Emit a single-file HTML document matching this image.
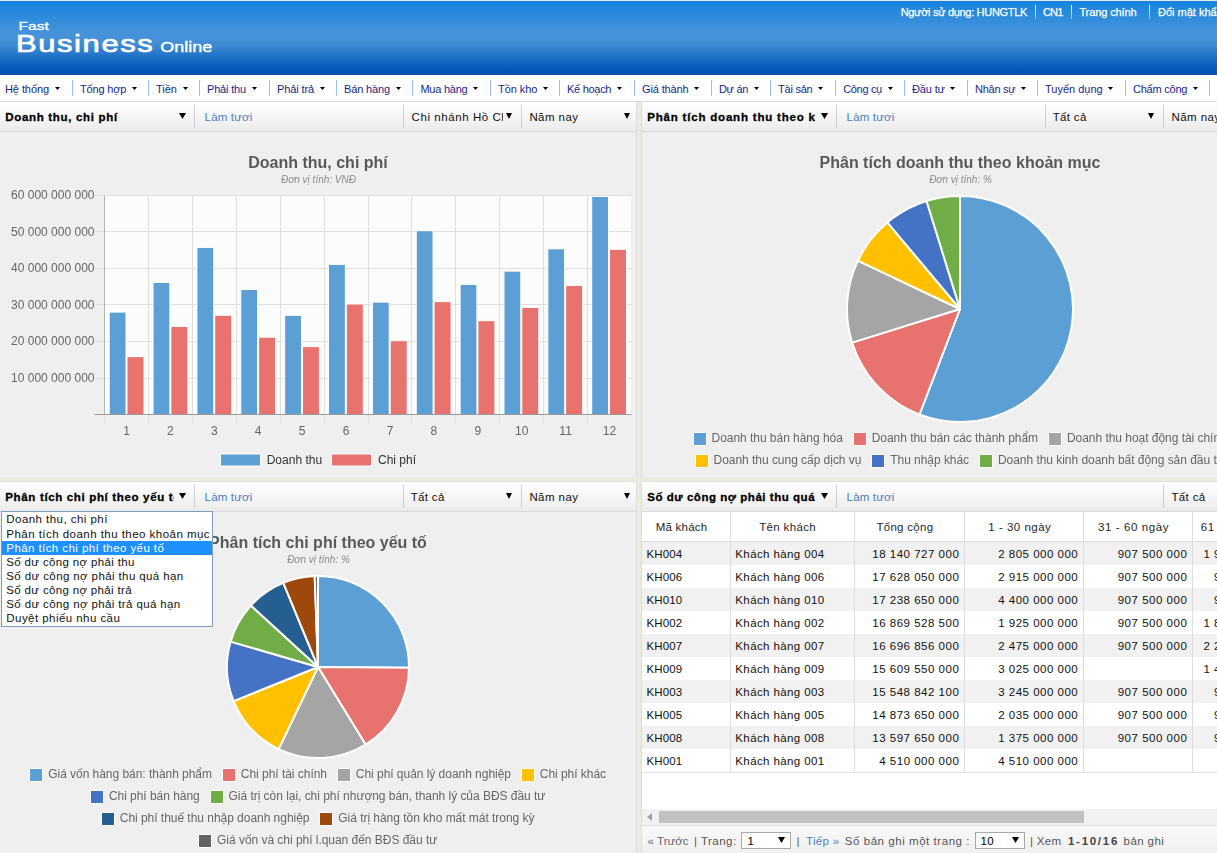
<!DOCTYPE html>
<html><head><meta charset="utf-8"><title>Fast Business Online</title>
<style>
html,body{margin:0;padding:0}
body{width:1217px;height:853px;overflow:hidden;position:relative;background:#ecebe0;font-family:"Liberation Sans",sans-serif}
.b{position:absolute;display:block}
.t{position:absolute;white-space:nowrap;display:block}
.b .t{position:absolute}
svg text{font-family:"Liberation Sans",sans-serif}
</style></head><body>
<div class="b" style="left:0px;top:0px;width:1217px;height:1px;background:#ece8e2;"></div>
<div class="b" style="left:0px;top:1px;width:1217px;height:74px;background:linear-gradient(to bottom,#1584e0 0%,#2f8cdc 22%,#4392da 40%,#4792d8 49%,#3f8bd3 60%,#2676ca 72%,#0f62be 85%,#0355b5 94%,#0052b4 100%);"></div>
<svg class="b" style="left:0;top:0" width="240" height="75" viewBox="0 0 240 75">
<g fill="#fff" font-family="Liberation Sans, sans-serif">
<text x="18.5" y="30" font-size="11.6" textLength="30.4" lengthAdjust="spacingAndGlyphs" stroke="#fff" stroke-width="0.3">Fast</text>
<g transform="translate(16.0 52.1) scale(1.28 1)"><text x="0" y="0" font-size="24.2" textLength="106.88" lengthAdjust="spacing" stroke="#fff" stroke-width="0.7">Business</text></g>
<text x="160.3" y="52.3" font-size="14.4" textLength="52" lengthAdjust="spacingAndGlyphs" stroke="#fff" stroke-width="0.35">Online</text>
</g></svg>
<span class="t" style="left:900.70px;top:6.00px;font-size:11px;line-height:13px;color:#fff;letter-spacing:-0.314px;-webkit-text-stroke:0.25px #fff;">Người sử dụng: HUNGTLK</span>
<div class="b" style="left:1035px;top:5px;width:1px;height:14px;background:linear-gradient(#fff,#bfb39d);"></div>
<span class="t" style="left:1043.00px;top:6.00px;font-size:11px;line-height:13px;color:#fff;letter-spacing:-0.835px;-webkit-text-stroke:0.25px #fff;">CN1</span>
<div class="b" style="left:1071px;top:5px;width:1px;height:14px;background:linear-gradient(#fff,#bfb39d);"></div>
<span class="t" style="left:1079.40px;top:6.00px;font-size:11px;line-height:13px;color:#fff;letter-spacing:-0.099px;-webkit-text-stroke:0.25px #fff;">Trang chính</span>
<div class="b" style="left:1149px;top:5px;width:1px;height:14px;background:linear-gradient(#fff,#bfb39d);"></div>
<span class="t" style="left:1158.00px;top:6.00px;font-size:11px;line-height:13px;color:#fff;-webkit-text-stroke:0.25px #fff;">Đổi mật khẩu</span>
<div class="b" style="left:0px;top:75px;width:1217px;height:26px;background:#fff;"></div>
<div class="b" style="left:0px;top:101px;width:1217px;height:1px;background:#d9d9d9;"></div>
<span class="t" style="left:5.00px;top:83.00px;font-size:11px;line-height:13px;color:#16288c;letter-spacing:-0.080px;">Hệ thống</span>
<svg class="b" style="left:55px;top:87px" width="5" height="3" viewBox="0 0 5 3"><path d="M0 0H5L2.5 3Z" fill="#000"/></svg>
<div class="b" style="left:72px;top:80px;width:1px;height:16px;background:#9dc0ee;"></div>
<span class="t" style="left:80.00px;top:83.00px;font-size:11px;line-height:13px;color:#16288c;letter-spacing:-0.159px;">Tổng hợp</span>
<svg class="b" style="left:132px;top:87px" width="5" height="3" viewBox="0 0 5 3"><path d="M0 0H5L2.5 3Z" fill="#000"/></svg>
<div class="b" style="left:148px;top:80px;width:1px;height:16px;background:#9dc0ee;"></div>
<span class="t" style="left:156.00px;top:83.00px;font-size:11px;line-height:13px;color:#16288c;">Tiền</span>
<svg class="b" style="left:183px;top:87px" width="5" height="3" viewBox="0 0 5 3"><path d="M0 0H5L2.5 3Z" fill="#000"/></svg>
<div class="b" style="left:199px;top:80px;width:1px;height:16px;background:#9dc0ee;"></div>
<span class="t" style="left:207.00px;top:83.00px;font-size:11px;line-height:13px;color:#16288c;letter-spacing:-0.170px;">Phải thu</span>
<svg class="b" style="left:252px;top:87px" width="5" height="3" viewBox="0 0 5 3"><path d="M0 0H5L2.5 3Z" fill="#000"/></svg>
<div class="b" style="left:269px;top:80px;width:1px;height:16px;background:#9dc0ee;"></div>
<span class="t" style="left:277.00px;top:83.00px;font-size:11px;line-height:13px;color:#16288c;letter-spacing:-0.113px;">Phải trả</span>
<svg class="b" style="left:320px;top:87px" width="5" height="3" viewBox="0 0 5 3"><path d="M0 0H5L2.5 3Z" fill="#000"/></svg>
<div class="b" style="left:336px;top:80px;width:1px;height:16px;background:#9dc0ee;"></div>
<span class="t" style="left:344.00px;top:83.00px;font-size:11px;line-height:13px;color:#16288c;letter-spacing:-0.137px;">Bán hàng</span>
<svg class="b" style="left:396px;top:87px" width="5" height="3" viewBox="0 0 5 3"><path d="M0 0H5L2.5 3Z" fill="#000"/></svg>
<div class="b" style="left:412px;top:80px;width:1px;height:16px;background:#9dc0ee;"></div>
<span class="t" style="left:420.40px;top:83.00px;font-size:11px;line-height:13px;color:#16288c;letter-spacing:-0.240px;">Mua hàng</span>
<svg class="b" style="left:473px;top:87px" width="5" height="3" viewBox="0 0 5 3"><path d="M0 0H5L2.5 3Z" fill="#000"/></svg>
<div class="b" style="left:490px;top:80px;width:1px;height:16px;background:#9dc0ee;"></div>
<span class="t" style="left:498.00px;top:83.00px;font-size:11px;line-height:13px;color:#16288c;letter-spacing:-0.063px;">Tồn kho</span>
<svg class="b" style="left:543px;top:87px" width="5" height="3" viewBox="0 0 5 3"><path d="M0 0H5L2.5 3Z" fill="#000"/></svg>
<div class="b" style="left:559px;top:80px;width:1px;height:16px;background:#9dc0ee;"></div>
<span class="t" style="left:567.00px;top:83.00px;font-size:11px;line-height:13px;color:#16288c;letter-spacing:-0.285px;">Kế hoạch</span>
<svg class="b" style="left:617px;top:87px" width="5" height="3" viewBox="0 0 5 3"><path d="M0 0H5L2.5 3Z" fill="#000"/></svg>
<div class="b" style="left:634px;top:80px;width:1px;height:16px;background:#9dc0ee;"></div>
<span class="t" style="left:642.00px;top:83.00px;font-size:11px;line-height:13px;color:#16288c;letter-spacing:-0.133px;">Giá thành</span>
<svg class="b" style="left:694px;top:87px" width="5" height="3" viewBox="0 0 5 3"><path d="M0 0H5L2.5 3Z" fill="#000"/></svg>
<div class="b" style="left:711px;top:80px;width:1px;height:16px;background:#9dc0ee;"></div>
<span class="t" style="left:719.00px;top:83.00px;font-size:11px;line-height:13px;color:#16288c;letter-spacing:-0.320px;">Dự án</span>
<svg class="b" style="left:754px;top:87px" width="5" height="3" viewBox="0 0 5 3"><path d="M0 0H5L2.5 3Z" fill="#000"/></svg>
<div class="b" style="left:770px;top:80px;width:1px;height:16px;background:#9dc0ee;"></div>
<span class="t" style="left:778.00px;top:83.00px;font-size:11px;line-height:13px;color:#16288c;letter-spacing:-0.224px;">Tài sản</span>
<svg class="b" style="left:818px;top:87px" width="5" height="3" viewBox="0 0 5 3"><path d="M0 0H5L2.5 3Z" fill="#000"/></svg>
<div class="b" style="left:835px;top:80px;width:1px;height:16px;background:#9dc0ee;"></div>
<span class="t" style="left:843.20px;top:83.00px;font-size:11px;line-height:13px;color:#16288c;letter-spacing:-0.324px;">Công cụ</span>
<svg class="b" style="left:888px;top:87px" width="5" height="3" viewBox="0 0 5 3"><path d="M0 0H5L2.5 3Z" fill="#000"/></svg>
<div class="b" style="left:904px;top:80px;width:1px;height:16px;background:#9dc0ee;"></div>
<span class="t" style="left:912.00px;top:83.00px;font-size:11px;line-height:13px;color:#16288c;letter-spacing:-0.142px;">Đầu tư</span>
<svg class="b" style="left:950px;top:87px" width="5" height="3" viewBox="0 0 5 3"><path d="M0 0H5L2.5 3Z" fill="#000"/></svg>
<div class="b" style="left:967px;top:80px;width:1px;height:16px;background:#9dc0ee;"></div>
<span class="t" style="left:975.00px;top:83.00px;font-size:11px;line-height:13px;color:#16288c;letter-spacing:-0.259px;">Nhân sự</span>
<svg class="b" style="left:1021px;top:87px" width="5" height="3" viewBox="0 0 5 3"><path d="M0 0H5L2.5 3Z" fill="#000"/></svg>
<div class="b" style="left:1037px;top:80px;width:1px;height:16px;background:#9dc0ee;"></div>
<span class="t" style="left:1045.00px;top:83.00px;font-size:11px;line-height:13px;color:#16288c;letter-spacing:-0.009px;">Tuyển dụng</span>
<svg class="b" style="left:1108px;top:87px" width="5" height="3" viewBox="0 0 5 3"><path d="M0 0H5L2.5 3Z" fill="#000"/></svg>
<div class="b" style="left:1125px;top:80px;width:1px;height:16px;background:#9dc0ee;"></div>
<span class="t" style="left:1133.00px;top:83.00px;font-size:11px;line-height:13px;color:#16288c;letter-spacing:-0.228px;">Chấm công</span>
<svg class="b" style="left:1193px;top:87px" width="5" height="3" viewBox="0 0 5 3"><path d="M0 0H5L2.5 3Z" fill="#000"/></svg>
<div class="b" style="left:1209px;top:80px;width:1px;height:16px;background:#9dc0ee;"></div>
<div class="b" style="left:0px;top:132px;width:636px;height:345px;background:#efefef;"></div>
<div class="b" style="left:636px;top:101px;width:1px;height:376px;background:#dcdcdc;"></div>
<div class="b" style="left:0px;top:102px;width:636px;height:29px;background:linear-gradient(to bottom,#ffffff 0%,#f6f6f6 50%,#ebebeb 100%);"></div>
<div class="b" style="left:0px;top:131px;width:636px;height:1px;background:#d8d8d8;"></div>
<div class="b" style="left:0px;top:102px;width:173.6px;height:29px;overflow:hidden">
<span class="t" style="left:5.30px;top:9.00px;font-size:11.5px;line-height:13px;color:#000;font-weight:bold;letter-spacing:0.678px;-webkit-text-stroke:0.3px #000;">Doanh thu, chi phí</span>
</div>
<svg class="b" style="left:179px;top:113px" width="7" height="6" viewBox="0 0 7 6"><path d="M0 0H7L3.5 6Z" fill="#000"/></svg>
<div class="b" style="left:194px;top:105px;width:1px;height:23px;background:#cfcfcf;"></div>
<span class="t" style="left:204.60px;top:111.00px;font-size:11.5px;line-height:13px;color:#4a80c2;letter-spacing:0.156px;">Làm tươi</span>
<div class="b" style="left:403px;top:105px;width:1px;height:23px;background:#cfcfcf;"></div>
<div class="b" style="left:411px;top:102px;width:91.5px;height:29px;overflow:hidden">
<span class="t" style="left:0.60px;top:9.00px;font-size:11.5px;line-height:13px;color:#111;letter-spacing:0.568px;">Chi nhánh Hồ Chí Minh</span>
</div>
<svg class="b" style="left:506px;top:113px" width="6" height="6" viewBox="0 0 6 6"><path d="M0 0H6L3.0 6Z" fill="#000"/></svg>
<div class="b" style="left:521px;top:105px;width:1px;height:23px;background:#cfcfcf;"></div>
<span class="t" style="left:529.40px;top:111.00px;font-size:11.5px;line-height:13px;color:#111;letter-spacing:0.426px;">Năm nay</span>
<svg class="b" style="left:624px;top:113px" width="6" height="6" viewBox="0 0 6 6"><path d="M0 0H6L3.0 6Z" fill="#000"/></svg>
<div class="b" style="left:642px;top:132px;width:640px;height:345px;background:#efefef;"></div>
<div class="b" style="left:641px;top:101px;width:1px;height:376px;background:#dcdcdc;"></div>
<div class="b" style="left:642px;top:102px;width:640px;height:29px;background:linear-gradient(to bottom,#ffffff 0%,#f6f6f6 50%,#ebebeb 100%);"></div>
<div class="b" style="left:642px;top:131px;width:640px;height:1px;background:#d8d8d8;"></div>
<div class="b" style="left:642px;top:102px;width:173.6px;height:29px;overflow:hidden">
<span class="t" style="left:5.30px;top:9.00px;font-size:11.5px;line-height:13px;color:#000;font-weight:bold;letter-spacing:0.801px;-webkit-text-stroke:0.3px #000;">Phân tích doanh thu theo khoản mục</span>
</div>
<svg class="b" style="left:821px;top:113px" width="7" height="6" viewBox="0 0 7 6"><path d="M0 0H7L3.5 6Z" fill="#000"/></svg>
<div class="b" style="left:836px;top:105px;width:1px;height:23px;background:#cfcfcf;"></div>
<span class="t" style="left:846.60px;top:111.00px;font-size:11.5px;line-height:13px;color:#4a80c2;letter-spacing:0.156px;">Làm tươi</span>
<div class="b" style="left:1045px;top:105px;width:1px;height:23px;background:#cfcfcf;"></div>
<span class="t" style="left:1052.70px;top:111.00px;font-size:11.5px;line-height:13px;color:#111;letter-spacing:0.341px;">Tất cả</span>
<svg class="b" style="left:1148px;top:113px" width="6" height="6" viewBox="0 0 6 6"><path d="M0 0H6L3.0 6Z" fill="#000"/></svg>
<div class="b" style="left:1163px;top:105px;width:1px;height:23px;background:#cfcfcf;"></div>
<span class="t" style="left:1171.50px;top:111.00px;font-size:11.5px;line-height:13px;color:#111;letter-spacing:0.426px;">Năm nay</span>
<div class="b" style="left:0px;top:481px;width:636px;height:1px;background:#dcdcdc;"></div>
<div class="b" style="left:0px;top:512px;width:636px;height:345px;background:#efefef;"></div>
<div class="b" style="left:636px;top:481px;width:1px;height:376px;background:#dcdcdc;"></div>
<div class="b" style="left:0px;top:482px;width:636px;height:29px;background:linear-gradient(to bottom,#ffffff 0%,#f6f6f6 50%,#ebebeb 100%);"></div>
<div class="b" style="left:0px;top:511px;width:636px;height:1px;background:#d8d8d8;"></div>
<div class="b" style="left:0px;top:482px;width:173.6px;height:29px;overflow:hidden">
<span class="t" style="left:5.30px;top:9.00px;font-size:11.5px;line-height:13px;color:#000;font-weight:bold;letter-spacing:0.657px;-webkit-text-stroke:0.3px #000;">Phân tích chi phí theo yếu tố</span>
</div>
<svg class="b" style="left:179px;top:493px" width="7" height="6" viewBox="0 0 7 6"><path d="M0 0H7L3.5 6Z" fill="#000"/></svg>
<div class="b" style="left:194px;top:485px;width:1px;height:23px;background:#cfcfcf;"></div>
<span class="t" style="left:204.60px;top:491.00px;font-size:11.5px;line-height:13px;color:#4a80c2;letter-spacing:0.156px;">Làm tươi</span>
<div class="b" style="left:403px;top:485px;width:1px;height:23px;background:#cfcfcf;"></div>
<span class="t" style="left:410.70px;top:491.00px;font-size:11.5px;line-height:13px;color:#111;letter-spacing:0.341px;">Tất cả</span>
<svg class="b" style="left:506px;top:493px" width="6" height="6" viewBox="0 0 6 6"><path d="M0 0H6L3.0 6Z" fill="#000"/></svg>
<div class="b" style="left:521px;top:485px;width:1px;height:23px;background:#cfcfcf;"></div>
<span class="t" style="left:529.40px;top:491.00px;font-size:11.5px;line-height:13px;color:#111;letter-spacing:0.426px;">Năm nay</span>
<svg class="b" style="left:624px;top:493px" width="6" height="6" viewBox="0 0 6 6"><path d="M0 0H6L3.0 6Z" fill="#000"/></svg>
<div class="b" style="left:642px;top:481px;width:640px;height:1px;background:#dcdcdc;"></div>
<div class="b" style="left:642px;top:512px;width:640px;height:345px;background:#fff;"></div>
<div class="b" style="left:641px;top:481px;width:1px;height:376px;background:#dcdcdc;"></div>
<div class="b" style="left:642px;top:482px;width:640px;height:29px;background:linear-gradient(to bottom,#ffffff 0%,#f6f6f6 50%,#ebebeb 100%);"></div>
<div class="b" style="left:642px;top:511px;width:640px;height:1px;background:#d8d8d8;"></div>
<div class="b" style="left:642px;top:482px;width:173.6px;height:29px;overflow:hidden">
<span class="t" style="left:5.30px;top:9.00px;font-size:11.5px;line-height:13px;color:#000;font-weight:bold;letter-spacing:0.535px;-webkit-text-stroke:0.3px #000;">Số dư công nợ phải thu quá hạn</span>
</div>
<svg class="b" style="left:821px;top:493px" width="7" height="6" viewBox="0 0 7 6"><path d="M0 0H7L3.5 6Z" fill="#000"/></svg>
<div class="b" style="left:836px;top:485px;width:1px;height:23px;background:#cfcfcf;"></div>
<span class="t" style="left:846.60px;top:491.00px;font-size:11.5px;line-height:13px;color:#4a80c2;letter-spacing:0.156px;">Làm tươi</span>
<div class="b" style="left:1163px;top:485px;width:1px;height:23px;background:#cfcfcf;"></div>
<span class="t" style="left:1171.50px;top:491.00px;font-size:11.5px;line-height:13px;color:#111;letter-spacing:0.341px;">Tất cả</span>
<svg class="b" style="left:0;top:0;will-change:transform" width="636" height="477" viewBox="0 0 636 477" font-family="Liberation Sans, sans-serif"><text x="318" y="168" font-size="16" font-weight="bold" fill="#595959" text-anchor="middle">Doanh thu, chi phí</text><text x="318.5" y="183" font-size="10" font-style="italic" fill="#8a8a8a" text-anchor="middle">Đơn vị tính: VNĐ</text><rect x="104.0" y="195.0" width="527.0" height="219.0" fill="#fcfcfc"/><path d="M104.5 195.5V424.5" stroke="#dfdfdf" stroke-width="1"/><path d="M148.5 195.5V424.5" stroke="#dfdfdf" stroke-width="1"/><path d="M192.5 195.5V424.5" stroke="#dfdfdf" stroke-width="1"/><path d="M236.5 195.5V424.5" stroke="#dfdfdf" stroke-width="1"/><path d="M280.5 195.5V424.5" stroke="#dfdfdf" stroke-width="1"/><path d="M324.5 195.5V424.5" stroke="#dfdfdf" stroke-width="1"/><path d="M368.5 195.5V424.5" stroke="#dfdfdf" stroke-width="1"/><path d="M411.5 195.5V424.5" stroke="#dfdfdf" stroke-width="1"/><path d="M455.5 195.5V424.5" stroke="#dfdfdf" stroke-width="1"/><path d="M499.5 195.5V424.5" stroke="#dfdfdf" stroke-width="1"/><path d="M543.5 195.5V424.5" stroke="#dfdfdf" stroke-width="1"/><path d="M587.5 195.5V424.5" stroke="#dfdfdf" stroke-width="1"/><path d="M94.5 378.5H631.5" stroke="#dfdfdf" stroke-width="1"/><text x="94.5" y="381.8" font-size="12" fill="#666" text-anchor="end">10 000 000 000</text><path d="M94.5 341.5H631.5" stroke="#dfdfdf" stroke-width="1"/><text x="94.5" y="345.3" font-size="12" fill="#666" text-anchor="end">20 000 000 000</text><path d="M94.5 304.5H631.5" stroke="#dfdfdf" stroke-width="1"/><text x="94.5" y="308.8" font-size="12" fill="#666" text-anchor="end">30 000 000 000</text><path d="M94.5 268.5H631.5" stroke="#dfdfdf" stroke-width="1"/><text x="94.5" y="272.3" font-size="12" fill="#666" text-anchor="end">40 000 000 000</text><path d="M94.5 231.5H631.5" stroke="#dfdfdf" stroke-width="1"/><text x="94.5" y="235.8" font-size="12" fill="#666" text-anchor="end">50 000 000 000</text><path d="M94.5 195.5H631.5" stroke="#dfdfdf" stroke-width="1"/><text x="94.5" y="199.3" font-size="12" fill="#666" text-anchor="end">60 000 000 000</text><rect x="109.20" y="312.1" width="16.8" height="102.4" fill="#5b9fd5" stroke="#fff" stroke-width="1"/><rect x="127.00" y="356.6" width="17" height="57.9" fill="#e8736e" stroke="#fff" stroke-width="1"/><text x="126.5" y="435" font-size="12" fill="#666" text-anchor="middle">1</text><rect x="153.06" y="282.5" width="16.8" height="132.0" fill="#5b9fd5" stroke="#fff" stroke-width="1"/><rect x="170.87" y="326.4" width="17" height="88.1" fill="#e8736e" stroke="#fff" stroke-width="1"/><text x="170.4" y="435" font-size="12" fill="#666" text-anchor="middle">2</text><rect x="196.93" y="247.4" width="16.8" height="167.1" fill="#5b9fd5" stroke="#fff" stroke-width="1"/><rect x="214.73" y="315.3" width="17" height="99.2" fill="#e8736e" stroke="#fff" stroke-width="1"/><text x="214.3" y="435" font-size="12" fill="#666" text-anchor="middle">3</text><rect x="240.80" y="289.5" width="16.8" height="125.0" fill="#5b9fd5" stroke="#fff" stroke-width="1"/><rect x="258.60" y="337.2" width="17" height="77.3" fill="#e8736e" stroke="#fff" stroke-width="1"/><text x="258.2" y="435" font-size="12" fill="#666" text-anchor="middle">4</text><rect x="284.66" y="315.3" width="16.8" height="99.2" fill="#5b9fd5" stroke="#fff" stroke-width="1"/><rect x="302.46" y="346.6" width="17" height="67.9" fill="#e8736e" stroke="#fff" stroke-width="1"/><text x="302.1" y="435" font-size="12" fill="#666" text-anchor="middle">5</text><rect x="328.53" y="264.4" width="16.8" height="150.1" fill="#5b9fd5" stroke="#fff" stroke-width="1"/><rect x="346.33" y="304.0" width="17" height="110.5" fill="#e8736e" stroke="#fff" stroke-width="1"/><text x="346.0" y="435" font-size="12" fill="#666" text-anchor="middle">6</text><rect x="372.39" y="302.1" width="16.8" height="112.4" fill="#5b9fd5" stroke="#fff" stroke-width="1"/><rect x="390.19" y="340.7" width="17" height="73.8" fill="#e8736e" stroke="#fff" stroke-width="1"/><text x="390.0" y="435" font-size="12" fill="#666" text-anchor="middle">7</text><rect x="416.25" y="230.7" width="16.8" height="183.8" fill="#5b9fd5" stroke="#fff" stroke-width="1"/><rect x="434.06" y="301.6" width="17" height="112.9" fill="#e8736e" stroke="#fff" stroke-width="1"/><text x="433.9" y="435" font-size="12" fill="#666" text-anchor="middle">8</text><rect x="460.12" y="284.4" width="16.8" height="130.1" fill="#5b9fd5" stroke="#fff" stroke-width="1"/><rect x="477.92" y="320.7" width="17" height="93.8" fill="#e8736e" stroke="#fff" stroke-width="1"/><text x="477.8" y="435" font-size="12" fill="#666" text-anchor="middle">9</text><rect x="503.99" y="271.1" width="16.8" height="143.4" fill="#5b9fd5" stroke="#fff" stroke-width="1"/><rect x="521.78" y="307.5" width="17" height="107.0" fill="#e8736e" stroke="#fff" stroke-width="1"/><text x="521.7" y="435" font-size="12" fill="#666" text-anchor="middle">10</text><rect x="547.85" y="248.8" width="16.8" height="165.7" fill="#5b9fd5" stroke="#fff" stroke-width="1"/><rect x="565.65" y="285.4" width="17" height="129.1" fill="#e8736e" stroke="#fff" stroke-width="1"/><text x="565.6" y="435" font-size="12" fill="#666" text-anchor="middle">11</text><rect x="591.72" y="196.5" width="16.8" height="218.0" fill="#5b9fd5" stroke="#fff" stroke-width="1"/><rect x="609.51" y="249.3" width="17" height="165.2" fill="#e8736e" stroke="#fff" stroke-width="1"/><text x="609.5" y="435" font-size="12" fill="#666" text-anchor="middle">12</text><path d="M94.5 414.5H631.5" stroke="#9a9a9a" stroke-width="1"/><path d="M104.5 195.5V414.5" stroke="#b5b5b5" stroke-width="1"/><rect x="220.5" y="454" width="40" height="12" fill="#5b9fd5" stroke="#fff" stroke-width="1"/><text x="266.7" y="464" font-size="12" fill="#333">Doanh thu</text><rect x="331.5" y="454" width="40" height="12" fill="#e8736e" stroke="#fff" stroke-width="1"/><text x="378" y="464" font-size="12" fill="#333">Chi phí</text></svg>
<svg class="b" style="left:0;top:0;will-change:transform" width="1280" height="477" viewBox="0 0 1280 477" font-family="Liberation Sans, sans-serif"><text x="960" y="168" font-size="16" font-weight="bold" fill="#595959" text-anchor="middle">Phân tích doanh thu theo khoản mục</text><text x="960.5" y="183" font-size="10" font-style="italic" fill="#8a8a8a" text-anchor="middle">Đơn vị tính: %</text><path d="M960 309L960.00 196.00A113 113 0 1 1 919.50 414.49Z" fill="#5b9fd5" stroke="#fff" stroke-width="2" stroke-linejoin="round"/><path d="M960 309L919.50 414.49A113 113 0 0 1 852.11 342.60Z" fill="#e8736e" stroke="#fff" stroke-width="2" stroke-linejoin="round"/><path d="M960 309L852.11 342.60A113 113 0 0 1 857.84 260.71Z" fill="#a5a5a5" stroke="#fff" stroke-width="2" stroke-linejoin="round"/><path d="M960 309L857.84 260.71A113 113 0 0 1 887.37 222.44Z" fill="#ffc000" stroke="#fff" stroke-width="2" stroke-linejoin="round"/><path d="M960 309L887.37 222.44A113 113 0 0 1 926.58 201.05Z" fill="#4472c4" stroke="#fff" stroke-width="2" stroke-linejoin="round"/><path d="M960 309L926.58 201.05A113 113 0 0 1 960.00 196.00Z" fill="#70ad47" stroke="#fff" stroke-width="2" stroke-linejoin="round"/><rect x="693.5" y="432.5" width="13" height="13" fill="#5b9fd5" stroke="#fff" stroke-width="1"/><text x="711.55" y="442" font-size="12" fill="#666" textLength="131.32" lengthAdjust="spacing">Doanh thu bán hàng hóa</text><rect x="853.5" y="432.5" width="13" height="13" fill="#e8736e" stroke="#fff" stroke-width="1"/><text x="871.67" y="442" font-size="12" fill="#666" textLength="166.45" lengthAdjust="spacing">Doanh thu bán các thành phẩm</text><rect x="1048.5" y="432.5" width="13" height="13" fill="#a5a5a5" stroke="#fff" stroke-width="1"/><text x="1066.92" y="442" font-size="12" fill="#666" textLength="159.82" lengthAdjust="spacing">Doanh thu hoạt động tài chính</text><rect x="695.5" y="454.5" width="13" height="13" fill="#ffc000" stroke="#fff" stroke-width="1"/><text x="713.54" y="464" font-size="12" fill="#666" textLength="147.87" lengthAdjust="spacing">Doanh thu cung cấp dịch vụ</text><rect x="871.5" y="454.5" width="13" height="13" fill="#4472c4" stroke="#fff" stroke-width="1"/><text x="890.21" y="464" font-size="12" fill="#666" textLength="78.91" lengthAdjust="spacing">Thu nhập khác</text><rect x="979.5" y="454.5" width="13" height="13" fill="#70ad47" stroke="#fff" stroke-width="1"/><text x="997.92" y="464" font-size="12" fill="#666" textLength="226.84" lengthAdjust="spacing">Doanh thu kinh doanh bất động sản đầu tư</text></svg>
<svg class="b" style="left:0;top:0;will-change:transform" width="636" height="853" viewBox="0 0 636 853" font-family="Liberation Sans, sans-serif"><text x="318" y="548" font-size="16" font-weight="bold" fill="#595959" text-anchor="middle">Phân tích chi phí theo yếu tố</text><text x="318.5" y="563" font-size="10" font-style="italic" fill="#8a8a8a" text-anchor="middle">Đơn vị tính: %</text><path d="M318 667L318.00 576.00A91 91 0 0 1 409.00 667.64Z" fill="#5b9fd5" stroke="#fff" stroke-width="2" stroke-linejoin="round"/><path d="M318 667L409.00 667.64A91 91 0 0 1 365.55 744.59Z" fill="#e8736e" stroke="#fff" stroke-width="2" stroke-linejoin="round"/><path d="M318 667L365.55 744.59A91 91 0 0 1 278.68 749.07Z" fill="#a5a5a5" stroke="#fff" stroke-width="2" stroke-linejoin="round"/><path d="M318 667L278.68 749.07A91 91 0 0 1 233.63 701.09Z" fill="#ffc000" stroke="#fff" stroke-width="2" stroke-linejoin="round"/><path d="M318 667L233.63 701.09A91 91 0 0 1 230.61 641.61Z" fill="#4472c4" stroke="#fff" stroke-width="2" stroke-linejoin="round"/><path d="M318 667L230.61 641.61A91 91 0 0 1 250.91 605.52Z" fill="#70ad47" stroke="#fff" stroke-width="2" stroke-linejoin="round"/><path d="M318 667L250.91 605.52A91 91 0 0 1 283.32 582.87Z" fill="#255e91" stroke="#fff" stroke-width="2" stroke-linejoin="round"/><path d="M318 667L283.32 582.87A91 91 0 0 1 314.67 576.06Z" fill="#9e480e" stroke="#fff" stroke-width="2" stroke-linejoin="round"/><path d="M318 667L314.67 576.06A91 91 0 0 1 318.00 576.00Z" fill="#636363" stroke="#fff" stroke-width="2" stroke-linejoin="round"/><rect x="29.5" y="768.5" width="13" height="13" fill="#5b9fd5" stroke="#fff" stroke-width="1"/><text x="48.21" y="778" font-size="12" fill="#666" textLength="163.80" lengthAdjust="spacing">Giá vốn hàng bán: thành phẩm</text><rect x="222.5" y="768.5" width="13" height="13" fill="#e8736e" stroke="#fff" stroke-width="1"/><text x="240.81" y="778" font-size="12" fill="#666" textLength="86.20" lengthAdjust="spacing">Chi phí tài chính</text><rect x="337.5" y="768.5" width="13" height="13" fill="#a5a5a5" stroke="#fff" stroke-width="1"/><text x="355.81" y="778" font-size="12" fill="#666" textLength="155.18" lengthAdjust="spacing">Chi phí quản lý doanh nghiệp</text><rect x="521.5" y="768.5" width="13" height="13" fill="#ffc000" stroke="#fff" stroke-width="1"/><text x="539.79" y="778" font-size="12" fill="#666" textLength="66.30" lengthAdjust="spacing">Chi phí khác</text><rect x="90.5" y="790.5" width="13" height="13" fill="#4472c4" stroke="#fff" stroke-width="1"/><text x="108.89" y="800" font-size="12" fill="#666" textLength="90.85" lengthAdjust="spacing">Chi phí bán hàng</text><rect x="210.5" y="790.5" width="13" height="13" fill="#70ad47" stroke="#fff" stroke-width="1"/><text x="228.55" y="800" font-size="12" fill="#666" textLength="316.86" lengthAdjust="spacing">Giá trị còn lại, chi phí nhượng bán, thanh lý của BĐS đầu tư</text><rect x="101.5" y="812.5" width="13" height="13" fill="#255e91" stroke="#fff" stroke-width="1"/><text x="119.79" y="822" font-size="12" fill="#666" textLength="189.68" lengthAdjust="spacing">Chi phí thuế thu nhập doanh nghiệp</text><rect x="319.5" y="812.5" width="13" height="13" fill="#9e480e" stroke="#fff" stroke-width="1"/><text x="338.27" y="822" font-size="12" fill="#666" textLength="196.24" lengthAdjust="spacing">Giá trị hàng tồn kho mất mát trong kỳ</text><rect x="198.5" y="834.5" width="13" height="13" fill="#636363" stroke="#fff" stroke-width="1"/><text x="217.06" y="844" font-size="12" fill="#666" textLength="220.17" lengthAdjust="spacing">Giá vốn và chi phí l.quan đến BĐS đầu tư</text></svg>
<div class="b" style="left:1px;top:511px;width:212px;height:116px;background:#fff;border:1px solid #7f9db9;box-sizing:border-box;"></div>
<span class="t" style="left:6.30px;top:513.40px;font-size:11.5px;line-height:13px;color:#111;letter-spacing:0.453px;">Doanh thu, chi phí</span>
<span class="t" style="left:6.30px;top:527.50px;font-size:11.5px;line-height:13px;color:#111;letter-spacing:0.463px;">Phân tích doanh thu theo khoản mục</span>
<div class="b" style="left:2px;top:541px;width:210px;height:14px;background:#1e90ff;"></div>
<span class="t" style="left:6.30px;top:541.60px;font-size:11.5px;line-height:13px;color:#fff;letter-spacing:0.422px;">Phân tích chi phí theo yếu tố</span>
<span class="t" style="left:6.30px;top:555.70px;font-size:11.5px;line-height:13px;color:#111;letter-spacing:0.353px;">Số dư công nợ phải thu</span>
<span class="t" style="left:6.30px;top:569.80px;font-size:11.5px;line-height:13px;color:#111;letter-spacing:0.393px;">Số dư công nợ phải thu quá hạn</span>
<span class="t" style="left:6.30px;top:583.90px;font-size:11.5px;line-height:13px;color:#111;letter-spacing:0.338px;">Số dư công nợ phải trả</span>
<span class="t" style="left:6.30px;top:598.00px;font-size:11.5px;line-height:13px;color:#111;letter-spacing:0.379px;">Số dư công nợ phải trả quá hạn</span>
<span class="t" style="left:6.30px;top:612.10px;font-size:11.5px;line-height:13px;color:#111;letter-spacing:0.448px;">Duyệt phiếu nhu cầu</span>
<div class="b" style="left:642px;top:512px;width:640px;height:29px;background:#fff;"></div>
<div class="b" style="left:642px;top:541px;width:640px;height:1px;background:#dddddd;"></div>
<div class="b" style="left:642px;top:542px;width:640px;height:23px;background:#f1f1f1;"></div>
<div class="b" style="left:642px;top:588px;width:640px;height:23px;background:#f1f1f1;"></div>
<div class="b" style="left:642px;top:634px;width:640px;height:23px;background:#f1f1f1;"></div>
<div class="b" style="left:642px;top:680px;width:640px;height:23px;background:#f1f1f1;"></div>
<div class="b" style="left:642px;top:726px;width:640px;height:23px;background:#f1f1f1;"></div>
<div class="b" style="left:730px;top:512px;width:1px;height:260px;background:#dddddd;"></div>
<div class="b" style="left:854px;top:512px;width:1px;height:260px;background:#dddddd;"></div>
<div class="b" style="left:964px;top:512px;width:1px;height:260px;background:#dddddd;"></div>
<div class="b" style="left:1083px;top:512px;width:1px;height:260px;background:#dddddd;"></div>
<div class="b" style="left:1192px;top:512px;width:1px;height:260px;background:#dddddd;"></div>
<div class="b" style="left:642px;top:772px;width:640px;height:1px;background:#dddddd;"></div>
<span class="t" style="left:655.70px;top:521.00px;font-size:11.5px;line-height:13px;color:#1f1f2a;letter-spacing:0.243px;">Mã khách</span>
<span class="t" style="left:759.20px;top:521.00px;font-size:11.5px;line-height:13px;color:#1f1f2a;letter-spacing:0.345px;">Tên khách</span>
<span class="t" style="left:876.40px;top:521.00px;font-size:11.5px;line-height:13px;color:#1f1f2a;letter-spacing:0.295px;">Tổng cộng</span>
<span class="t" style="left:988.30px;top:521.00px;font-size:11.5px;line-height:13px;color:#1f1f2a;letter-spacing:0.497px;">1 - 30 ngày</span>
<span class="t" style="left:1098.00px;top:521.00px;font-size:11.5px;line-height:13px;color:#1f1f2a;letter-spacing:0.606px;">31 - 60 ngày</span>
<span class="t" style="left:1200.70px;top:521.00px;font-size:11.5px;line-height:13px;color:#1f1f2a;letter-spacing:0.606px;">61 - 90 ngày</span>
<span class="t" style="left:646.40px;top:548.00px;font-size:11.5px;line-height:13px;color:#111;letter-spacing:0.168px;">KH004</span>
<span class="t" style="left:735.30px;top:548.00px;font-size:11.5px;line-height:13px;color:#111;letter-spacing:0.395px;">Khách hàng 004</span>
<span class="t" style="left:872.30px;top:548.00px;font-size:11.5px;line-height:13px;color:#111;letter-spacing:0.505px;">18 140 727 000</span>
<span class="t" style="left:998.16px;top:548.00px;font-size:11.5px;line-height:13px;color:#111;letter-spacing:0.500px;">2 805 000 000</span>
<span class="t" style="left:1117.70px;top:548.00px;font-size:11.5px;line-height:13px;color:#111;letter-spacing:0.514px;">907 500 000</span>
<span class="t" style="left:1203.46px;top:548.00px;font-size:11.5px;line-height:13px;color:#111;letter-spacing:0.500px;">1 905 000 000</span>
<span class="t" style="left:646.40px;top:571.00px;font-size:11.5px;line-height:13px;color:#111;letter-spacing:0.168px;">KH006</span>
<span class="t" style="left:735.30px;top:571.00px;font-size:11.5px;line-height:13px;color:#111;letter-spacing:0.395px;">Khách hàng 006</span>
<span class="t" style="left:872.30px;top:571.00px;font-size:11.5px;line-height:13px;color:#111;letter-spacing:0.505px;">17 628 050 000</span>
<span class="t" style="left:998.16px;top:571.00px;font-size:11.5px;line-height:13px;color:#111;letter-spacing:0.500px;">2 915 000 000</span>
<span class="t" style="left:1117.70px;top:571.00px;font-size:11.5px;line-height:13px;color:#111;letter-spacing:0.514px;">907 500 000</span>
<span class="t" style="left:1213.90px;top:571.00px;font-size:11.5px;line-height:13px;color:#111;letter-spacing:0.514px;">907 500 000</span>
<span class="t" style="left:646.40px;top:594.00px;font-size:11.5px;line-height:13px;color:#111;letter-spacing:0.168px;">KH010</span>
<span class="t" style="left:735.30px;top:594.00px;font-size:11.5px;line-height:13px;color:#111;letter-spacing:0.395px;">Khách hàng 010</span>
<span class="t" style="left:872.30px;top:594.00px;font-size:11.5px;line-height:13px;color:#111;letter-spacing:0.505px;">17 238 650 000</span>
<span class="t" style="left:998.16px;top:594.00px;font-size:11.5px;line-height:13px;color:#111;letter-spacing:0.500px;">4 400 000 000</span>
<span class="t" style="left:1117.70px;top:594.00px;font-size:11.5px;line-height:13px;color:#111;letter-spacing:0.514px;">907 500 000</span>
<span class="t" style="left:1213.90px;top:594.00px;font-size:11.5px;line-height:13px;color:#111;letter-spacing:0.514px;">907 500 000</span>
<span class="t" style="left:646.40px;top:617.00px;font-size:11.5px;line-height:13px;color:#111;letter-spacing:0.168px;">KH002</span>
<span class="t" style="left:735.30px;top:617.00px;font-size:11.5px;line-height:13px;color:#111;letter-spacing:0.395px;">Khách hàng 002</span>
<span class="t" style="left:872.30px;top:617.00px;font-size:11.5px;line-height:13px;color:#111;letter-spacing:0.505px;">16 869 528 500</span>
<span class="t" style="left:998.16px;top:617.00px;font-size:11.5px;line-height:13px;color:#111;letter-spacing:0.500px;">1 925 000 000</span>
<span class="t" style="left:1117.70px;top:617.00px;font-size:11.5px;line-height:13px;color:#111;letter-spacing:0.514px;">907 500 000</span>
<span class="t" style="left:1203.46px;top:617.00px;font-size:11.5px;line-height:13px;color:#111;letter-spacing:0.500px;">1 815 000 000</span>
<span class="t" style="left:646.40px;top:640.00px;font-size:11.5px;line-height:13px;color:#111;letter-spacing:0.168px;">KH007</span>
<span class="t" style="left:735.30px;top:640.00px;font-size:11.5px;line-height:13px;color:#111;letter-spacing:0.395px;">Khách hàng 007</span>
<span class="t" style="left:872.30px;top:640.00px;font-size:11.5px;line-height:13px;color:#111;letter-spacing:0.505px;">16 696 856 000</span>
<span class="t" style="left:998.16px;top:640.00px;font-size:11.5px;line-height:13px;color:#111;letter-spacing:0.500px;">2 475 000 000</span>
<span class="t" style="left:1117.70px;top:640.00px;font-size:11.5px;line-height:13px;color:#111;letter-spacing:0.514px;">907 500 000</span>
<span class="t" style="left:1203.46px;top:640.00px;font-size:11.5px;line-height:13px;color:#111;letter-spacing:0.500px;">2 268 750 000</span>
<span class="t" style="left:646.40px;top:663.00px;font-size:11.5px;line-height:13px;color:#111;letter-spacing:0.168px;">KH009</span>
<span class="t" style="left:735.30px;top:663.00px;font-size:11.5px;line-height:13px;color:#111;letter-spacing:0.395px;">Khách hàng 009</span>
<span class="t" style="left:872.30px;top:663.00px;font-size:11.5px;line-height:13px;color:#111;letter-spacing:0.505px;">15 609 550 000</span>
<span class="t" style="left:998.16px;top:663.00px;font-size:11.5px;line-height:13px;color:#111;letter-spacing:0.500px;">3 025 000 000</span>
<span class="t" style="left:1203.46px;top:663.00px;font-size:11.5px;line-height:13px;color:#111;letter-spacing:0.500px;">1 452 000 000</span>
<span class="t" style="left:646.40px;top:686.00px;font-size:11.5px;line-height:13px;color:#111;letter-spacing:0.168px;">KH003</span>
<span class="t" style="left:735.30px;top:686.00px;font-size:11.5px;line-height:13px;color:#111;letter-spacing:0.395px;">Khách hàng 003</span>
<span class="t" style="left:872.30px;top:686.00px;font-size:11.5px;line-height:13px;color:#111;letter-spacing:0.505px;">15 548 842 100</span>
<span class="t" style="left:998.16px;top:686.00px;font-size:11.5px;line-height:13px;color:#111;letter-spacing:0.500px;">3 245 000 000</span>
<span class="t" style="left:1117.70px;top:686.00px;font-size:11.5px;line-height:13px;color:#111;letter-spacing:0.514px;">907 500 000</span>
<span class="t" style="left:1213.90px;top:686.00px;font-size:11.5px;line-height:13px;color:#111;letter-spacing:0.514px;">907 500 000</span>
<span class="t" style="left:646.40px;top:709.00px;font-size:11.5px;line-height:13px;color:#111;letter-spacing:0.168px;">KH005</span>
<span class="t" style="left:735.30px;top:709.00px;font-size:11.5px;line-height:13px;color:#111;letter-spacing:0.395px;">Khách hàng 005</span>
<span class="t" style="left:872.30px;top:709.00px;font-size:11.5px;line-height:13px;color:#111;letter-spacing:0.505px;">14 873 650 000</span>
<span class="t" style="left:998.16px;top:709.00px;font-size:11.5px;line-height:13px;color:#111;letter-spacing:0.500px;">2 035 000 000</span>
<span class="t" style="left:1117.70px;top:709.00px;font-size:11.5px;line-height:13px;color:#111;letter-spacing:0.514px;">907 500 000</span>
<span class="t" style="left:1213.90px;top:709.00px;font-size:11.5px;line-height:13px;color:#111;letter-spacing:0.514px;">907 500 000</span>
<span class="t" style="left:646.40px;top:732.00px;font-size:11.5px;line-height:13px;color:#111;letter-spacing:0.168px;">KH008</span>
<span class="t" style="left:735.30px;top:732.00px;font-size:11.5px;line-height:13px;color:#111;letter-spacing:0.395px;">Khách hàng 008</span>
<span class="t" style="left:872.30px;top:732.00px;font-size:11.5px;line-height:13px;color:#111;letter-spacing:0.505px;">13 597 650 000</span>
<span class="t" style="left:998.16px;top:732.00px;font-size:11.5px;line-height:13px;color:#111;letter-spacing:0.500px;">1 375 000 000</span>
<span class="t" style="left:1117.70px;top:732.00px;font-size:11.5px;line-height:13px;color:#111;letter-spacing:0.514px;">907 500 000</span>
<span class="t" style="left:1213.90px;top:732.00px;font-size:11.5px;line-height:13px;color:#111;letter-spacing:0.514px;">907 500 000</span>
<span class="t" style="left:646.40px;top:755.00px;font-size:11.5px;line-height:13px;color:#111;letter-spacing:0.168px;">KH001</span>
<span class="t" style="left:735.30px;top:755.00px;font-size:11.5px;line-height:13px;color:#111;letter-spacing:0.395px;">Khách hàng 001</span>
<span class="t" style="left:879.26px;top:755.00px;font-size:11.5px;line-height:13px;color:#111;letter-spacing:0.500px;">4 510 000 000</span>
<span class="t" style="left:998.16px;top:755.00px;font-size:11.5px;line-height:13px;color:#111;letter-spacing:0.500px;">4 510 000 000</span>
<div class="b" style="left:642px;top:809px;width:640px;height:16px;background:#f1f1f1;"></div>
<div class="b" style="left:659px;top:811px;width:425px;height:12px;background:#c1c1c1;"></div>
<svg class="b" style="left:647px;top:813px" width="5" height="8" viewBox="0 0 5 8"><path d="M5 0V8L0 4Z" fill="#a3a3a3"/></svg>
<div class="b" style="left:642px;top:825px;width:640px;height:1px;background:#dddddd;"></div>
<div class="b" style="left:642px;top:826px;width:640px;height:27px;background:linear-gradient(to bottom,#f9f9f9,#f0f0f0);"></div>
<span class="t" style="left:647.60px;top:835.00px;font-size:11.5px;line-height:13px;color:#666;letter-spacing:0.029px;">« Trước</span>
<span class="t" style="left:694.00px;top:835.00px;font-size:11.5px;line-height:13px;color:#555;letter-spacing:0.477px;">| Trang:</span>
<div class="b" style="left:741px;top:832px;width:50px;height:17px;background:#fff;border:1px solid #a9a9a9;box-sizing:border-box;"></div>
<span class="t" style="left:747.40px;top:835.00px;font-size:11.5px;line-height:13px;color:#000;">1</span>
<svg class="b" style="left:778px;top:837px" width="7" height="6" viewBox="0 0 7 6"><path d="M0 0H7L3.5 6Z" fill="#000"/></svg>
<span class="t" style="left:796.50px;top:835.00px;font-size:11.5px;line-height:13px;color:#555;">|</span>
<span class="t" style="left:806.00px;top:835.00px;font-size:11.5px;line-height:13px;color:#4a80c2;letter-spacing:0.311px;">Tiếp »</span>
<span class="t" style="left:844.80px;top:835.00px;font-size:11.5px;line-height:13px;color:#555;letter-spacing:0.548px;">Số bản ghi một trang :</span>
<div class="b" style="left:975px;top:832px;width:50px;height:17px;background:#fff;border:1px solid #a9a9a9;box-sizing:border-box;"></div>
<span class="t" style="left:980.60px;top:835.00px;font-size:11.5px;line-height:13px;color:#000;letter-spacing:0.355px;">10</span>
<svg class="b" style="left:1012px;top:837px" width="7" height="6" viewBox="0 0 7 6"><path d="M0 0H7L3.5 6Z" fill="#000"/></svg>
<span class="t" style="left:1030.00px;top:835.00px;font-size:11.5px;line-height:13px;color:#555;letter-spacing:0.334px;">| Xem</span>
<span class="t" style="left:1068.00px;top:835.00px;font-size:11.5px;line-height:13px;color:#444;font-weight:bold;letter-spacing:1.714px;">1-10/16</span>
<span class="t" style="left:1123.60px;top:835.00px;font-size:11.5px;line-height:13px;color:#555;letter-spacing:0.410px;">bản ghi</span>
</body></html>
